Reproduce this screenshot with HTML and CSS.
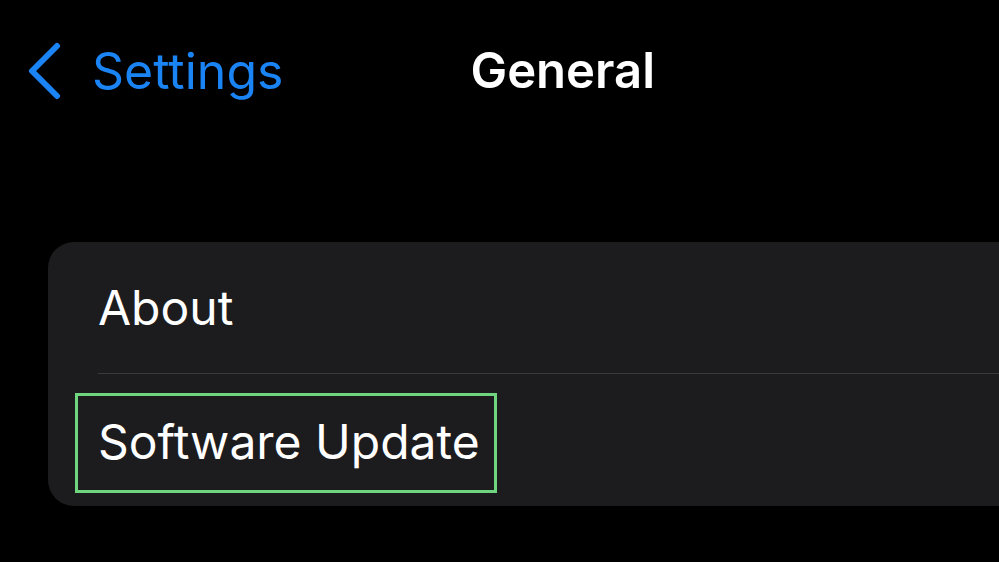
FILE: index.html
```html
<!DOCTYPE html>
<html>
<head>
    <title>General</title>
    <link rel="stylesheet" href="styles.css">
</head>
<body>
    <div class="navbar">
        <a class="back" href="#">
            <svg class="chevron" width="36" height="58" viewBox="0 0 36 58">
                <path d="M31 4 L6 29 L31 54" fill="none" stroke="#1a84f5" stroke-width="6" stroke-linecap="round" stroke-linejoin="round"/>
            </svg>
            <span class="back-label">Settings</span>
        </a>
        <h1 class="title">General</h1>
    </div>

    <div class="group">
        <div class="row">
            <span class="label">About</span>
        </div>
        <div class="row">
            <span class="label highlight">Software Update</span>
        </div>
    </div>
</body>
</html>
```

FILE: styles.css
```css
body {
    margin: 0;
    background-color: #000;
    font-family: 'Inter', 'Noto Sans', sans-serif;
    color: #fff;
    overflow: hidden;
}

.navbar {
    display: flex;
    align-items: center;
    height: 141px;
    padding-left: 26px;
}

.back {
    display: flex;
    align-items: center;
    gap: 30px;
    text-decoration: none;
    color: #1a84f5;
}

.back-label {
    font-size: 50px;
}

.title {
    margin: 0 0 0 187px;
    font-size: 49px;
    font-weight: 600;
}

.group {
    margin: 101px 0 0 48px;
    background-color: #1c1c1e;
    border-radius: 26px 0 0 26px;
}

.row {
    display: flex;
    align-items: center;
    height: 131px;
    margin-left: 50px;
}

.row + .row {
    border-top: 1px solid #3a3a3c;
    height: 132px;
}

.label {
    font-size: 48px;
}

.highlight {
    margin: 5px 0 0 -23px;
    padding: 16px 14px 19px 20px;
    border: 3px solid #6fd67f;
}
```
